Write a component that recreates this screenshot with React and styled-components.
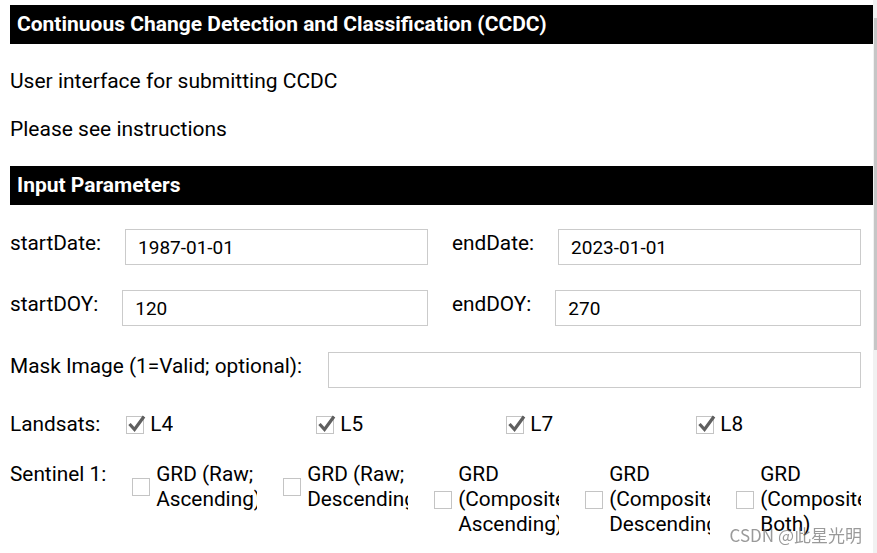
import React from 'react';
import styled, { createGlobalStyle } from 'styled-components';

const GlobalStyle = createGlobalStyle`
  html, body {
    margin: 0;
    padding: 0;
    overflow: hidden;
    background: #fff;
  }
  body {
    font-family: Roboto, "Liberation Sans", Arial, sans-serif;
    color: #000;
  }
`;

const Content = styled.div`
  padding: 5px 4px 0 10px;
`;

// thin page scrollbar on the right edge (drawn, the headless page hides real ones)
const ScrollTrack = styled.div`
  position: fixed;
  top: 0;
  right: 0;
  width: 4px;
  height: 100%;
  background: #f1f1f1;
`;

const ScrollThumb = styled.div`
  margin: 18px 0 0 1px;
  height: 332px;
  background: #c6c6c6;
`;

const SectionBar = styled.div`
  height: 39px;
  box-sizing: border-box;
  display: flex;
  align-items: center;
  padding: 0 7px 2px;
  background: #000;
  color: #fff;
  font-size: 21px;
  font-weight: 700;
  white-space: nowrap;
  overflow: hidden;
`;

const Intro = styled.div`
  display: flex;
  flex-direction: column;
  gap: 23px;
  padding: 25px 0 24px;
`;

const Text = styled.div`
  font-size: 21px;
  line-height: 25px;
`;

const Form = styled.div`
  display: flex;
  flex-direction: column;
  padding: 24px 12px 0 0;
`;

const FieldRow = styled.div`
  display: flex;
  align-items: flex-start;
  gap: ${p => p.$gap || 24}px;
  margin-bottom: ${p => p.$mb || 25}px;
`;

const Label = styled.span`
  font-size: 20.8px;
  line-height: 28px;
  white-space: nowrap;
`;

const Input = styled.input`
  flex: 1;
  min-width: 0;
  height: 36px;
  box-sizing: border-box;
  border: 1px solid #cbcbcb;
  border-radius: 0;
  padding: 0 12px;
  font-family: inherit;
  font-size: 19px;
  color: #000;
  outline: none;
`;

const CheckRow = styled.div`
  display: flex;
  align-items: ${p => (p.$top ? 'flex-start' : 'center')};
  margin-bottom: ${p => p.$mb || 0}px;
`;

const RowLabel = styled.span`
  font-size: 20.8px;
  line-height: 25px;
  margin-right: 20px;
  white-space: nowrap;
`;

const CheckItem = styled.label`
  flex: none;
  width: ${p => p.$w}px;
  display: flex;
  align-items: center;
  gap: 6px;
  padding-left: 6px;
  box-sizing: border-box;
`;

const Box = styled.span`
  position: relative;
  flex: none;
  width: 18px;
  height: 18px;
  box-sizing: border-box;
  border: 1px solid #c4c4c4;
  background: #fff;

  svg {
    position: absolute;
    left: 1px;
    top: -4px;
    overflow: visible;
  }
`;

const CheckText = styled.span`
  font-size: 20.8px;
  line-height: 25px;
  width: ${p => (p.$clip ? '101px' : 'auto')};
  overflow: hidden;
`;

const Watermark = styled.div`
  position: fixed;
  right: 15px;
  bottom: 8px;
  font-family: "Noto Sans CJK SC", "Liberation Sans", sans-serif;
  font-size: 17px;
  line-height: 20px;
  color: rgba(120, 120, 120, 0.75);
  pointer-events: none;
`;

const Checkbox = ({ checked, width, clip, children }) => (
  <CheckItem $w={width}>
    <Box>
      {checked && (
        <svg width="17" height="19" viewBox="0 0 17 19">
          <path d="M1.5 11 L6.5 16.5 L16 3.5" fill="none" stroke="#5f5f5f" strokeWidth="3.2" />
        </svg>
      )}
    </Box>
    <CheckText $clip={clip}>{children}</CheckText>
  </CheckItem>
);

const landsats = ['L4', 'L5', 'L7', 'L8'];
const sentinel = [
  'GRD (Raw; Ascending)',
  'GRD (Raw; Descending)',
  'GRD (Composite; Ascending)',
  'GRD (Composite; Descending)',
  'GRD (Composite; Both)'
];

export default function App() {
  return (
    <>
      <GlobalStyle />
      <Content>
        <SectionBar>Continuous Change Detection and Classification (CCDC)</SectionBar>
        <Intro>
          <Text>User interface for submitting CCDC</Text>
          <Text>Please see instructions</Text>
        </Intro>
        <SectionBar>Input Parameters</SectionBar>
        <Form>
          <FieldRow>
            <Label>startDate:</Label>
            <Input defaultValue="1987-01-01" />
            <Label>endDate:</Label>
            <Input defaultValue="2023-01-01" />
          </FieldRow>
          <FieldRow $mb={26}>
            <Label>startDOY:</Label>
            <Input defaultValue="120" />
            <Label>endDOY:</Label>
            <Input defaultValue="270" />
          </FieldRow>
          <FieldRow $mb={24} $gap={26}>
            <Label>Mask Image (1=Valid; optional):</Label>
            <Input defaultValue="" />
          </FieldRow>
          <CheckRow $mb={25}>
            <RowLabel>Landsats:</RowLabel>
            {landsats.map(l => (
              <Checkbox key={l} checked width={190}>{l}</Checkbox>
            ))}
          </CheckRow>
          <CheckRow $top>
            <RowLabel>Sentinel 1:</RowLabel>
            {sentinel.map(s => (
              <Checkbox key={s} width={151} clip>{s}</Checkbox>
            ))}
          </CheckRow>
        </Form>
      </Content>
      <ScrollTrack>
        <ScrollThumb />
      </ScrollTrack>
      <Watermark>CSDN @此星光明</Watermark>
    </>
  );
}
